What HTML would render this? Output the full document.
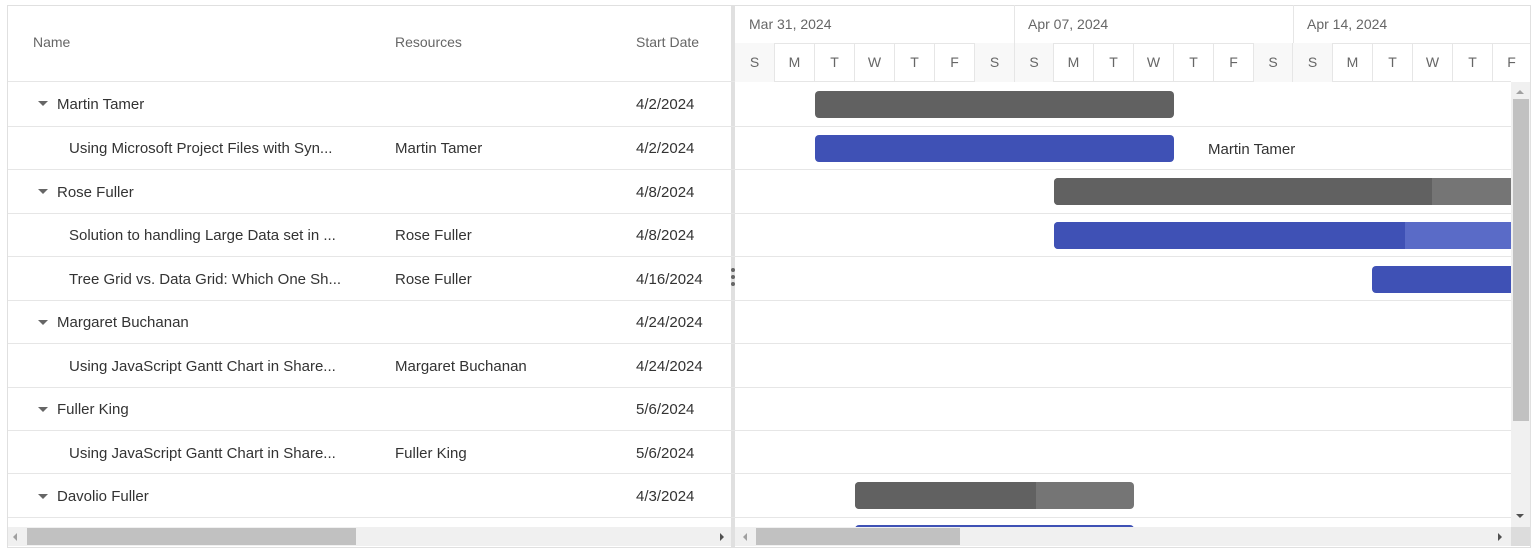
<!DOCTYPE html>
<html><head><meta charset="utf-8"><style>
*{box-sizing:border-box;margin:0;padding:0}
body{width:1536px;height:553px;background:#fff;font-family:"Liberation Sans",sans-serif;position:relative;overflow:hidden;color:#333}
.a{position:absolute}
.hl{position:absolute;height:1px;background:#e6e6e6}
.t{position:absolute;font-size:15px;color:#333;white-space:nowrap;line-height:18px}
.h{position:absolute;font-size:14px;color:#666;white-space:nowrap}
.tri{position:absolute;width:0;height:0;border-left:5px solid transparent;border-right:5px solid transparent;border-top:5px solid #666}
.bar{position:absolute;height:27px;border-radius:4px;overflow:hidden}
.day{position:absolute;top:43px;height:39px;border-right:1px solid #e6e6e6;font-size:14px;color:#666;text-align:center;line-height:39px}
</style></head><body>
<div class="a" style="left:7px;top:5px;width:1524px;height:543px;border:1px solid #e0e0e0"></div>
<div class="a" style="left:731px;top:5px;width:4px;height:543px;background:#e0e0e0"></div>
<div class="a" style="left:731px;top:268px;width:4px;height:4px;border-radius:2px;background:#666"></div>
<div class="a" style="left:731px;top:275px;width:4px;height:4px;border-radius:2px;background:#666"></div>
<div class="a" style="left:731px;top:282px;width:4px;height:4px;border-radius:2px;background:#666"></div>
<div class="h" style="left:33px;top:34px">Name</div>
<div class="h" style="left:395px;top:34px">Resources</div>
<div class="h" style="left:636px;top:34px">Start Date</div>
<div class="hl" style="left:8px;width:1503px;top:81px"></div>
<div class="hl" style="left:8px;width:1503px;top:126px"></div>
<div class="hl" style="left:8px;width:1503px;top:169px"></div>
<div class="hl" style="left:8px;width:1503px;top:213px"></div>
<div class="hl" style="left:8px;width:1503px;top:256px"></div>
<div class="hl" style="left:8px;width:1503px;top:300px"></div>
<div class="hl" style="left:8px;width:1503px;top:343px"></div>
<div class="hl" style="left:8px;width:1503px;top:387px"></div>
<div class="hl" style="left:8px;width:1503px;top:430px"></div>
<div class="hl" style="left:8px;width:1503px;top:473px"></div>
<div class="hl" style="left:8px;width:1503px;top:517px"></div>
<div class="tri" style="left:38px;top:101px"></div><div class="t" style="left:57px;top:96px">Martin Tamer</div><div class="t" style="left:636px;top:96px">4/2/2024</div>
<div class="t" style="left:69px;top:140px">Using Microsoft Project Files with Syn...</div><div class="t" style="left:395px;top:140px">Martin Tamer</div><div class="t" style="left:636px;top:140px">4/2/2024</div>
<div class="tri" style="left:38px;top:189px"></div><div class="t" style="left:57px;top:184px">Rose Fuller</div><div class="t" style="left:636px;top:184px">4/8/2024</div>
<div class="t" style="left:69px;top:227px">Solution to handling Large Data set in ...</div><div class="t" style="left:395px;top:227px">Rose Fuller</div><div class="t" style="left:636px;top:227px">4/8/2024</div>
<div class="t" style="left:69px;top:271px">Tree Grid vs. Data Grid: Which One Sh...</div><div class="t" style="left:395px;top:271px">Rose Fuller</div><div class="t" style="left:636px;top:271px">4/16/2024</div>
<div class="tri" style="left:38px;top:320px"></div><div class="t" style="left:57px;top:314px">Margaret Buchanan</div><div class="t" style="left:636px;top:314px">4/24/2024</div>
<div class="t" style="left:69px;top:358px">Using JavaScript Gantt Chart in Share...</div><div class="t" style="left:395px;top:358px">Margaret Buchanan</div><div class="t" style="left:636px;top:358px">4/24/2024</div>
<div class="tri" style="left:38px;top:407px"></div><div class="t" style="left:57px;top:401px">Fuller King</div><div class="t" style="left:636px;top:401px">5/6/2024</div>
<div class="t" style="left:69px;top:445px">Using JavaScript Gantt Chart in Share...</div><div class="t" style="left:395px;top:445px">Fuller King</div><div class="t" style="left:636px;top:445px">5/6/2024</div>
<div class="tri" style="left:38px;top:494px"></div><div class="t" style="left:57px;top:488px">Davolio Fuller</div><div class="t" style="left:636px;top:488px">4/3/2024</div>
<div class="hl" style="left:735px;width:795px;top:43px"></div>
<div class="a" style="left:1014px;top:5px;width:1px;height:38px;background:#e6e6e6"></div>
<div class="a" style="left:1293px;top:5px;width:1px;height:38px;background:#e6e6e6"></div>
<div class="h" style="left:749px;top:16px">Mar 31, 2024</div>
<div class="h" style="left:1028px;top:16px">Apr 07, 2024</div>
<div class="h" style="left:1307px;top:16px">Apr 14, 2024</div>
<div class="day" style="left:735px;width:40px;background:#f8f8f8">S</div>
<div class="day" style="left:775px;width:40px">M</div>
<div class="day" style="left:815px;width:40px">T</div>
<div class="day" style="left:855px;width:40px">W</div>
<div class="day" style="left:895px;width:40px">T</div>
<div class="day" style="left:935px;width:40px">F</div>
<div class="day" style="left:975px;width:40px;background:#f8f8f8">S</div>
<div class="day" style="left:1015px;width:39px;background:#f8f8f8">S</div>
<div class="day" style="left:1054px;width:40px">M</div>
<div class="day" style="left:1094px;width:40px">T</div>
<div class="day" style="left:1134px;width:40px">W</div>
<div class="day" style="left:1174px;width:40px">T</div>
<div class="day" style="left:1214px;width:40px">F</div>
<div class="day" style="left:1254px;width:39px;background:#f8f8f8">S</div>
<div class="day" style="left:1293px;width:40px;background:#f8f8f8">S</div>
<div class="day" style="left:1333px;width:40px">M</div>
<div class="day" style="left:1373px;width:40px">T</div>
<div class="day" style="left:1413px;width:40px">W</div>
<div class="day" style="left:1453px;width:40px">T</div>
<div class="day" style="left:1493px;width:37px;border-right:none">F</div>
<div class="a" style="left:735px;top:82px;width:776px;height:445px;overflow:hidden">
<div class="bar" style="left:80px;top:9px;width:359px;background:#616161"></div>
<div class="bar" style="left:80px;top:53px;width:359px;background:#3f51b5"></div>
<div class="bar" style="left:319px;top:96px;width:470px;background:#757575"><div style="width:378px;height:27px;background:#616161"></div></div>
<div class="bar" style="left:319px;top:140px;width:470px;background:#5a6bc7"><div style="width:351px;height:27px;background:#3f51b5"></div></div>
<div class="bar" style="left:637px;top:184px;width:200px;background:#3f51b5"></div>
<div class="bar" style="left:120px;top:400px;width:279px;background:#757575"><div style="width:181px;height:27px;background:#616161"></div></div>
<div class="bar" style="left:120px;top:443px;width:279px;background:#3f51b5"></div>
</div>
<div class="t" style="left:1208px;top:141px">Martin Tamer</div>
<div class="a" style="left:1511px;top:82px;width:19px;height:445px;background:#f0f0f0"></div>
<div class="a" style="left:1513px;top:99px;width:16px;height:322px;background:#c1c1c1"></div>
<div class="a" style="left:1516px;top:90px;border-left:4px solid transparent;border-right:4px solid transparent;border-bottom:4px solid #a0a0a0"></div>
<div class="a" style="left:1516px;top:514px;border-left:4px solid transparent;border-right:4px solid transparent;border-top:4px solid #505050"></div>
<div class="a" style="left:1511px;top:527px;width:19px;height:19px;background:#dcdcdc"></div>
<div class="a" style="left:8px;top:527px;width:723px;height:19px;background:#f0f0f0"></div>
<div class="a" style="left:27px;top:528px;width:329px;height:17px;background:#c1c1c1"></div>
<div class="a" style="left:13px;top:533px;border-top:4px solid transparent;border-bottom:4px solid transparent;border-right:4px solid #a0a0a0"></div>
<div class="a" style="left:720px;top:533px;border-top:4px solid transparent;border-bottom:4px solid transparent;border-left:4px solid #505050"></div>
<div class="a" style="left:735px;top:527px;width:776px;height:19px;background:#f0f0f0"></div>
<div class="a" style="left:756px;top:528px;width:204px;height:17px;background:#c1c1c1"></div>
<div class="a" style="left:743px;top:533px;border-top:4px solid transparent;border-bottom:4px solid transparent;border-right:4px solid #a0a0a0"></div>
<div class="a" style="left:1498px;top:533px;border-top:4px solid transparent;border-bottom:4px solid transparent;border-left:4px solid #505050"></div>
</body></html>
